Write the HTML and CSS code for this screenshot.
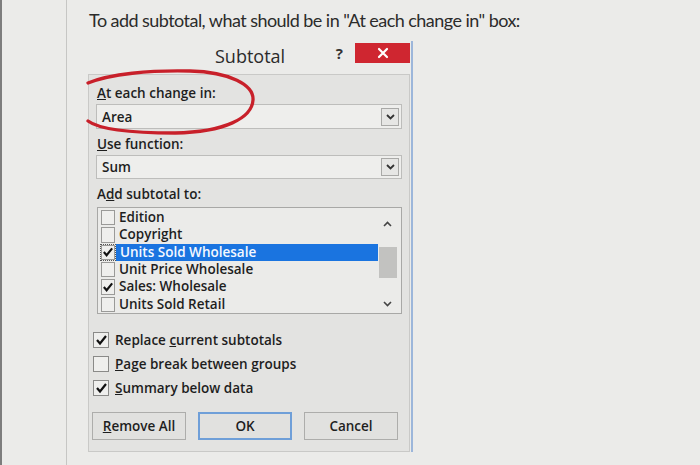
FILE: index.html
```html
<!DOCTYPE html>
<html>
<head>
<meta charset="utf-8">
<link rel="stylesheet" href="styles.css">
</head>
<body>
<div class="page">
  <div class="edge"></div>
  <div class="gutter"></div>
  <main class="content">
    <p class="question">To add subtotal, what should be in "At each change in" box:</p>
    <div class="dialog">
      <div class="titlebar">
        <span class="title">Subtotal</span>
        <span class="help">?</span>
        <span class="close">
          <svg width="12" height="12" viewBox="0 0 12 12"><path d="M2 2 L10 10 M10 2 L2 10" stroke="#fff" stroke-width="2.2" stroke-linecap="round"/></svg>
        </span>
      </div>
      <div class="panel">
        <div class="label"><u>A</u>t each change in:</div>
        <div class="select">
          <span class="value">Area</span>
          <span class="arrowbox"><svg width="9" height="6" viewBox="0 0 9 6"><path d="M1 1 L4.5 4.5 L8 1" fill="none" stroke="#333" stroke-width="1.8"/></svg></span>
        </div>
        <div class="label label-gap"><u>U</u>se function:</div>
        <div class="select select-tight">
          <span class="value">Sum</span>
          <span class="arrowbox"><svg width="9" height="6" viewBox="0 0 9 6"><path d="M1 1 L4.5 4.5 L8 1" fill="none" stroke="#333" stroke-width="1.8"/></svg></span>
        </div>
        <div class="label label-gap">A<u>d</u>d subtotal to:</div>
        <div class="listbox">
          <div class="items">
            <div class="item"><span class="cb"></span><span class="text">Edition</span></div>
            <div class="item"><span class="cb"></span><span class="text">Copyright</span></div>
            <div class="item selected"><span class="cb"><svg width="13" height="12" viewBox="0 0 13 12"><path d="M2 6 L5 9.5 L11 2" fill="none" stroke="#111" stroke-width="2.3"/></svg></span><span class="text">Units Sold Wholesale</span></div>
            <div class="item"><span class="cb"></span><span class="text">Unit Price Wholesale</span></div>
            <div class="item"><span class="cb"><svg width="13" height="12" viewBox="0 0 13 12"><path d="M2 6 L5 9.5 L11 2" fill="none" stroke="#111" stroke-width="2.3"/></svg></span><span class="text">Sales: Wholesale</span></div>
            <div class="item"><span class="cb"></span><span class="text">Units Sold Retail</span></div>
          </div>
          <div class="scrollbar">
            <svg class="sb-up" width="9" height="6" viewBox="0 0 9 6"><path d="M1 5 L4.5 1.5 L8 5" fill="none" stroke="#444" stroke-width="1.6"/></svg>
            <div class="thumb"></div>
            <svg class="sb-down" width="9" height="6" viewBox="0 0 9 6"><path d="M1 1 L4.5 4.5 L8 1" fill="none" stroke="#444" stroke-width="1.6"/></svg>
          </div>
        </div>
        <div class="options">
          <div class="option"><span class="box"><svg width="13" height="12" viewBox="0 0 13 12"><path d="M2 6 L5 9.5 L11 2" fill="none" stroke="#111" stroke-width="2.2"/></svg></span><span>Replace <u>c</u>urrent subtotals</span></div>
          <div class="option"><span class="box"></span><span><u>P</u>age break between groups</span></div>
          <div class="option"><span class="box"><svg width="13" height="12" viewBox="0 0 13 12"><path d="M2 6 L5 9.5 L11 2" fill="none" stroke="#111" stroke-width="2.2"/></svg></span><span><u>S</u>ummary below data</span></div>
        </div>
        <div class="buttons">
          <span class="btn"><u>R</u>emove All</span>
          <span class="btn btn-default">OK</span>
          <span class="btn">Cancel</span>
        </div>
      </div>
      <svg class="circle" width="200" height="110" viewBox="0 0 200 110">
        <path d="M2 42 C 24 33, 64 29, 104 30 C 144 31, 168 44, 167 59 C 166 77, 139 91, 89 92 C 49 92, 14 89, 2 80" fill="none" stroke="#c8202a" stroke-width="3.3" stroke-linecap="round"/>
      </svg>
    </div>
  </main>
</div>
</body>
</html>
```

FILE: styles.css
```css
* { box-sizing: border-box; }
html, body { margin: 0; padding: 0; }
body {
  background: #ebebe9;
  width: 700px;
  height: 465px;
  overflow: hidden;
}
.page {
  display: flex;
  height: 465px;
}
.edge {
  width: 2px;
  background: #7d7d7d;
}
.gutter {
  width: 65px;
  border-right: 1px solid #c6c6c4;
}
.content {
  flex: 1;
  padding-left: 19px;
}
.question {
  margin: 8px 0 0 3px;
  font-family: Lato, "Open Sans", sans-serif;
  font-size: 18px;
  letter-spacing: -0.55px;
  line-height: 24px;
  color: #2b2b2b;
  white-space: nowrap;
}
.dialog {
  position: relative;
  margin-top: 9px;
  width: 327px;
  border-right: 2px solid #9cb6da;
  font-family: "Open Sans", sans-serif;
  font-size: 13.5px;
  font-weight: 600;
  color: #1e1e1e;
}
.titlebar {
  display: flex;
  align-items: flex-start;
  height: 33px;
}
.title {
  margin: 3px 0 0 129px;
  font-size: 18px;
  line-height: 24px;
  font-weight: 400;
  color: #2a2a2a;
}
.help {
  margin: 2px 0 0 auto;
  font-size: 15px;
  font-weight: 700;
  line-height: 20px;
  color: #333;
}
.close {
  margin: 2px 1px 0 12px;
  width: 55px;
  height: 20px;
  background: #cf2630;
  display: flex;
  align-items: center;
  justify-content: center;
}
.panel {
  margin-left: 2px;
  width: 322px;
  border: 1px solid #c9c9c7;
  background: #e3e3e1;
  padding: 0 0 11px 0;
}
.label {
  margin: 10px 0 0 8px;
  line-height: 17px;
  height: 17px;
}
.label-gap { margin-top: 7px; }
.select {
  margin: 2px 7px 0 7px;
  height: 25px;
  border: 1px solid #bdbdbb;
  background: #eeeeec;
  display: flex;
  align-items: center;
  padding: 0 2px 0 5px;
}
.select-tight { margin-top: 2px; height: 24px; }
.value { flex: 1; }
.arrowbox {
  width: 18px;
  height: 18px;
  border: 1px solid #a9a9a7;
  background: #e6e6e4;
  display: flex;
  align-items: center;
  justify-content: center;
}
.listbox {
  margin: 4px 7px 0 8px;
  height: 107px;
  border: 1px solid #a8a8a6;
  background: #ebebe9;
  display: flex;
  padding-right: 4px;
}
.items {
  flex: 1;
  display: flex;
  flex-direction: column;
  padding-top: 1px;
}
.item {
  height: 17.5px;
  display: flex;
  align-items: stretch;
}
.cb {
  width: 14px;
  margin: 1px 0 1px 3px;
  border: 1px solid #9a9a98;
  background: #efefed;
  display: flex;
  align-items: center;
  justify-content: center;
}
.text {
  flex: 1;
  padding-left: 4px;
  line-height: 17px;
}
.selected .text {
  background: #1a74e0;
  color: #f4f8ff;
  margin-left: 1px;
}
.selected .cb { outline: 1px dotted #555; }
.scrollbar {
  width: 19px;
  display: flex;
  flex-direction: column;
  align-items: center;
}
.sb-up { margin-top: 13px; }
.thumb {
  margin-top: 20px;
  width: 18px;
  height: 31px;
  background: #c2c2c0;
}
.sb-down { margin-top: auto; margin-bottom: 6px; }
.options {
  margin: 14px 0 0 4px;
}
.option {
  height: 24px;
  display: flex;
  align-items: center;
}
.box {
  width: 16px;
  height: 16px;
  border: 1px solid #8a8a88;
  background: #efefed;
  display: flex;
  align-items: center;
  justify-content: center;
  margin-right: 6px;
}
.buttons {
  margin: 12px 0 0 3px;
  display: flex;
  gap: 12px;
}
.btn {
  width: 94px;
  height: 28px;
  border: 1px solid #adadab;
  background: #e1e1df;
  display: flex;
  align-items: center;
  justify-content: center;
}
.btn-default {
  border: 2px solid #6f9fd8;
}
.circle {
  position: absolute;
  left: 0;
  top: 0;
  pointer-events: none;
}
```
